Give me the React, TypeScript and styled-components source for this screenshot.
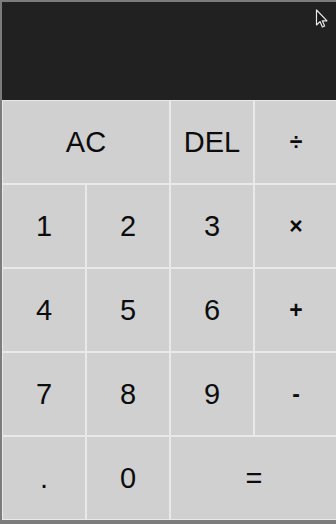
import React from "react";
import styled, { createGlobalStyle, css } from "styled-components";

const Global = createGlobalStyle`
  html, body { margin: 0; padding: 0; background: #7c7c7c; overflow: hidden; }
  body { font-family: "Liberation Sans", Arial, sans-serif; }
`;

const Frame = styled.div`
  position: relative;
  width: 336px;
  height: 524px;
  padding: 2px 0 0 2px;
  box-sizing: border-box;
  overflow: hidden;
  background: #7c7c7c;
`;

const Grid = styled.div`
  display: grid;
  grid-template-columns: repeat(4, 84px);
  grid-template-rows: 98px repeat(5, 84px);
`;

const Display = styled.div`
  grid-column: span 4;
  background: #212121;
`;

const Key = styled.button<{ $span?: number; $op?: boolean }>`
  grid-column: span ${(p) => p.$span ?? 1};
  box-sizing: border-box;
  margin: 0;
  padding: 0;
  border: 1px solid #e9e9e9;
  background: #d0d0d0;
  color: #0c0c0c;
  font-family: "Liberation Sans", Arial, sans-serif;
  font-size: 29px;
  font-weight: 400;
  display: flex;
  align-items: center;
  justify-content: center;
  cursor: pointer;
  outline: none;
  ${(p) =>
    p.$op &&
    css`
      font-size: 23px;
      font-weight: 700;
    `}
`;

const Cursor = styled.svg`
  position: absolute;
  top: 9px;
  left: 315px;
`;

const keys: { label: string; span?: number; op?: boolean }[] = [
  { label: "AC", span: 2 },
  { label: "DEL" },
  { label: "÷", op: true },
  { label: "1" },
  { label: "2" },
  { label: "3" },
  { label: "×", op: true },
  { label: "4" },
  { label: "5" },
  { label: "6" },
  { label: "+", op: true },
  { label: "7" },
  { label: "8" },
  { label: "9" },
  { label: "-", op: true },
  { label: "." },
  { label: "0" },
  { label: "=", span: 2 },
];

export default function App() {
  return (
    <>
      <Global />
      <Frame>
        <Grid>
          <Display />
          {keys.map((k) => (
            <Key key={k.label} $span={k.span} $op={k.op}>
              {k.label}
            </Key>
          ))}
        </Grid>
        <Cursor width="14" height="20" viewBox="0 0 14 20">
          <path
            d="M1.5 1 L1.5 16 L5 12.6 L7.4 18 L9.6 17 L7.3 11.8 L12 11.8 Z"
            fill="#1a1a1a"
            stroke="#e8e8e8"
            strokeWidth="1.2"
            strokeLinejoin="round"
          />
        </Cursor>
      </Frame>
    </>
  );
}
